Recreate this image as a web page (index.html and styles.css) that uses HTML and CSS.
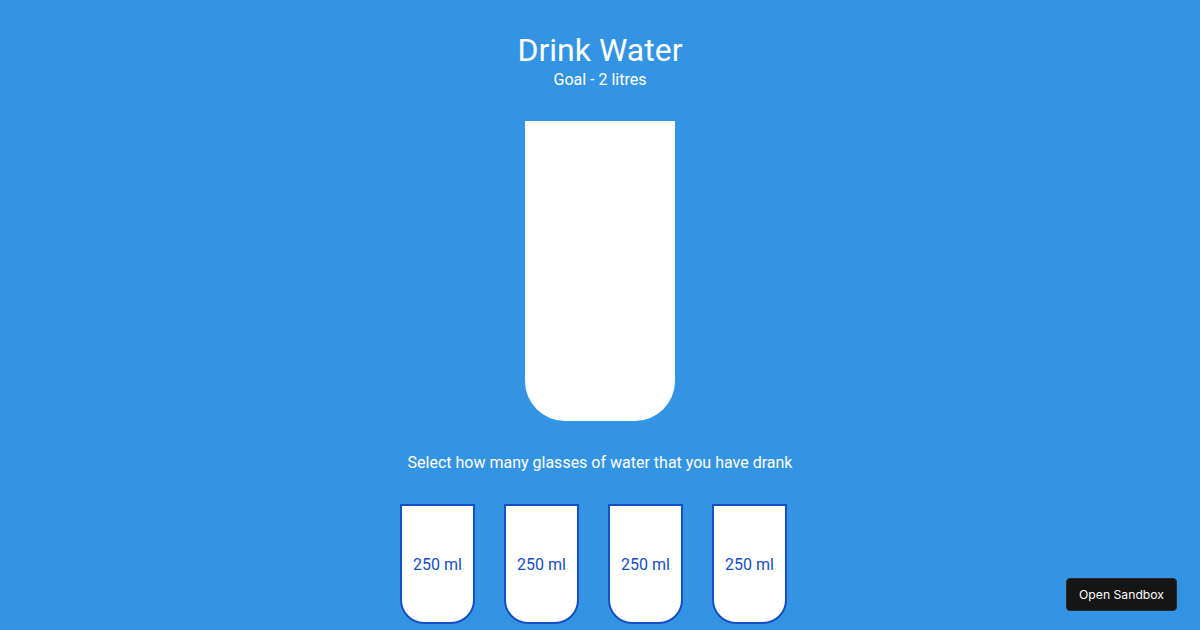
FILE: index.html
```html
<!DOCTYPE html>
<html lang="en">
<head>
<meta charset="UTF-8">
<title>Drink Water</title>
<link rel="stylesheet" href="styles.css">
</head>
<body>
  <main class="app">
    <h1 class="title">Drink Water</h1>
    <h3 class="goal">Goal - 2 litres</h3>
    <div class="cup"></div>
    <p class="text">Select how many glasses of water that you have drank</p>
    <div class="cups">
      <div class="cup-small">250 ml</div>
      <div class="cup-small">250 ml</div>
      <div class="cup-small">250 ml</div>
      <div class="cup-small">250 ml</div>
    </div>
  </main>
  <a class="sandbox" href="#">Open Sandbox</a>
</body>
</html>
```
FILE: styles.css
```css
* { box-sizing: border-box; }
html, body {
  margin: 0;
  height: 100%;
  overflow: hidden;
}
body {
  background: #3494e4;
  color: #fff;
  font-family: Roboto, "Liberation Sans", sans-serif;
}
.app {
  display: flex;
  flex-direction: column;
  align-items: center;
}
.title {
  margin: 31px 0 0;
  font-size: 32px;
  font-weight: 400;
  line-height: 38px;
}
.goal {
  margin: 1px 0 0;
  font-size: 16px;
  font-weight: 400;
  line-height: 19px;
}
.cup {
  margin-top: 32px;
  width: 150px;
  height: 300px;
  background: #fff;
  border-radius: 0 0 40px 40px;
}
.text {
  margin: 32px 0 0;
  font-size: 16px;
  line-height: 19px;
}
.cups {
  margin-top: 32px;
  display: flex;
  gap: 29px;
  padding-right: 13px;
}
.cup-small {
  width: 75px;
  height: 120px;
  background: #fff;
  border: 2px solid #144fc6;
  border-radius: 0 0 24px 24px;
  color: #144fc6;
  font-size: 16px;
  display: flex;
  align-items: center;
  justify-content: center;
}
.sandbox {
  position: fixed;
  right: 23px;
  bottom: 19px;
  width: 111px;
  height: 33px;
  display: flex;
  align-items: center;
  justify-content: center;
  background: #151515;
  border: 1px solid #2a2a2a;
  border-radius: 4px;
  color: #fff;
  font-family: Inter, "Liberation Sans", sans-serif;
  font-size: 12.2px;
  text-decoration: none;
}
```
